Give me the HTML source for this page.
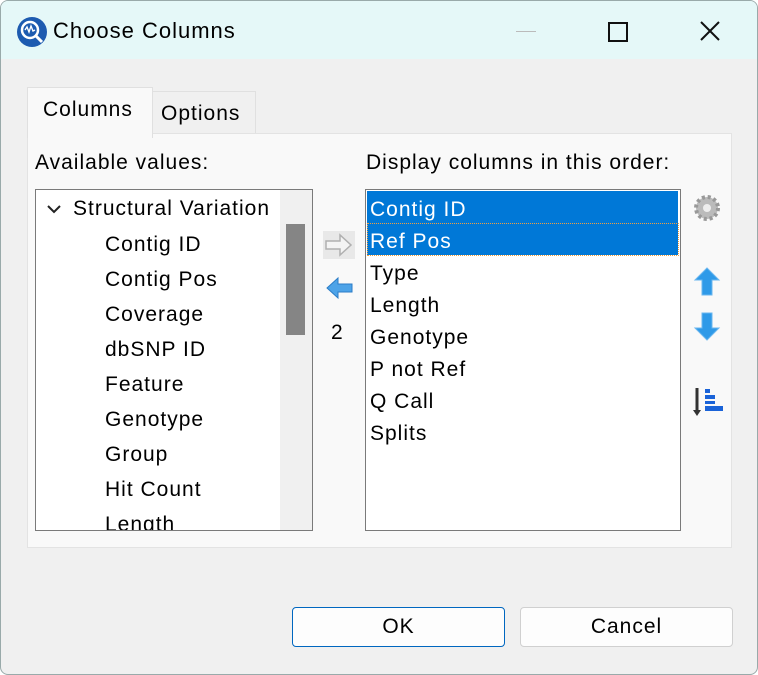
<!DOCTYPE html><html><head><style>
body{margin:0;width:758px;height:675px;overflow:hidden;font-family:"Liberation Sans",sans-serif;font-size:21px;letter-spacing:1px;color:#000;background:#fff}
.win{position:absolute;left:0;top:0;width:756px;height:673px;border:1px solid #9aa;border-radius:8px;background:#f0f0f0;overflow:hidden}
.title{position:absolute;left:0;top:0;width:756px;height:58px;background:#e5f8f8}
.a{position:absolute;white-space:nowrap}
.panel{position:absolute;left:26px;top:132px;width:703px;height:413px;background:#f9f9f9;border:1px solid #e3e3e3}
.list{position:absolute;background:#fff;border:1px solid #7a7a7a}
.btn{position:absolute;top:606px;width:211px;height:38px;background:#fdfdfd;border:1px solid #d0d0d0;border-radius:4px;text-align:center;line-height:38px}
</style></head><body><div class="win">
<div class="title">
<svg class="a" style="left:15px;top:15px" width="32" height="32" viewBox="0 0 32 32"><circle cx="16" cy="16" r="15" fill="#1d5bb0"/><circle cx="14" cy="14" r="8" fill="none" stroke="#fff" stroke-width="2.5"/><path d="M20 20l6 6" stroke="#fff" stroke-width="3"/><path d="M9 14l2-3 2 5 2-6 2 5 2-1" stroke="#fff" stroke-width="1.4" fill="none"/></svg>
<div class="a" style="left:52px;top:17px;font-size:22px">Choose Columns</div>
<div class="a" style="left:515px;top:30px;width:20px;height:1px;background:#bbb"></div>
<div class="a" style="left:607px;top:21px;width:16px;height:16px;border:2px solid #111"></div>
<svg class="a" style="left:698px;top:19px" width="22" height="22"><path d="M2 2L20 20M20 2L2 20" stroke="#111" stroke-width="2"/></svg>
</div>
<div class="a" style="left:151px;top:90px;width:102px;height:42px;background:#f0f0f0;border:1px solid #e0e0e0"></div>
<div class="a" style="left:160px;top:101px">Options</div>
<div class="panel"></div>
<div class="a" style="left:26px;top:86px;width:124px;height:50px;background:#f9f9f9;border:1px solid #e0e0e0;border-bottom:none"></div>
<div class="a" style="left:42px;top:97px">Columns</div>
<div class="a" style="left:34px;top:150px">Available values:</div>
<div class="a" style="left:365px;top:150px">Display columns in this order:</div>
<div class="list" style="left:34px;top:188px;width:276px;height:340px;overflow:hidden">
<div class="a" style="left:244px;top:0;width:32px;height:340px;background:#f0f0f0"></div>
<div class="a" style="left:250px;top:34px;width:19px;height:111px;background:#858585"></div>
<svg class="a" style="left:11px;top:14px" width="14" height="10"><path d="M1 2l6 6 6-6" stroke="#222" stroke-width="2" fill="none"/></svg>
<div class="a" style="left:37px;top:7px">Structural Variation</div>
<div class="a" style="left:69px;top:37px;line-height:35px">Contig ID<br>Contig Pos<br>Coverage<br>dbSNP ID<br>Feature<br>Genotype<br>Group<br>Hit Count<br>Length</div>
</div>
<div class="a" style="left:322px;top:230px;width:32px;height:28px;background:#e8e8e8"></div>
<svg class="a" style="left:323px;top:231px" width="30" height="26"><path d="M2 9h14V3l11 10-11 10v-6H2z" fill="#f4f4f4" stroke="#b0b0b0" stroke-width="1.5"/></svg>
<svg class="a" style="left:323px;top:274px" width="30" height="26"><path d="M28 9H14V3L3 13l11 10v-6h14z" fill="#4da3e8" stroke="#2a7cc7" stroke-width="1"/></svg>
<div class="a" style="left:330px;top:320px">2</div>
<div class="list" style="left:364px;top:188px;width:314px;height:340px;overflow:hidden">
<div class="a" style="left:1px;top:1px;width:311px;height:64px;background:#0078d7"></div>
<div class="a" style="left:1px;top:33px;width:310px;height:31px;border:1px dotted #f0a040"></div>
<div class="a" style="left:4px;top:4px;line-height:32px"><span style="color:#fff">Contig ID<br>Ref Pos</span><br>Type<br>Length<br>Genotype<br>P not Ref<br>Q Call<br>Splits</div>
</div>
<svg class="a" style="left:691px;top:192px" width="30" height="30"><circle cx="15" cy="15" r="11" fill="#bbb" stroke="#999" stroke-width="4" stroke-dasharray="3 2.8"/><circle cx="15" cy="15" r="4" fill="#eee"/></svg>
<svg class="a" style="left:692px;top:265px" width="28" height="32"><path d="M14 2L2 14h7v15h10V14h7z" fill="#2f9ae8" stroke="#6ab7f0"/></svg>
<svg class="a" style="left:692px;top:310px" width="28" height="32"><path d="M14 29L2 17h7V2h10v15h7z" fill="#2f9ae8" stroke="#6ab7f0"/></svg>
<svg class="a" style="left:690px;top:383px" width="34" height="34"><path d="M6 4v24" stroke="#333" stroke-width="3"/><path d="M2 26h8l-4 6z" fill="#333"/><path d="M14 5h5v4h-5zM14 11h10v4H14zM14 17h10v3H14zM14 22h18v5H14z" fill="#1a63d8"/></svg>
<div class="btn" style="left:291px;border:1px solid #0067c0">OK</div>
<div class="btn" style="left:519px">Cancel</div>
</div></body></html>
